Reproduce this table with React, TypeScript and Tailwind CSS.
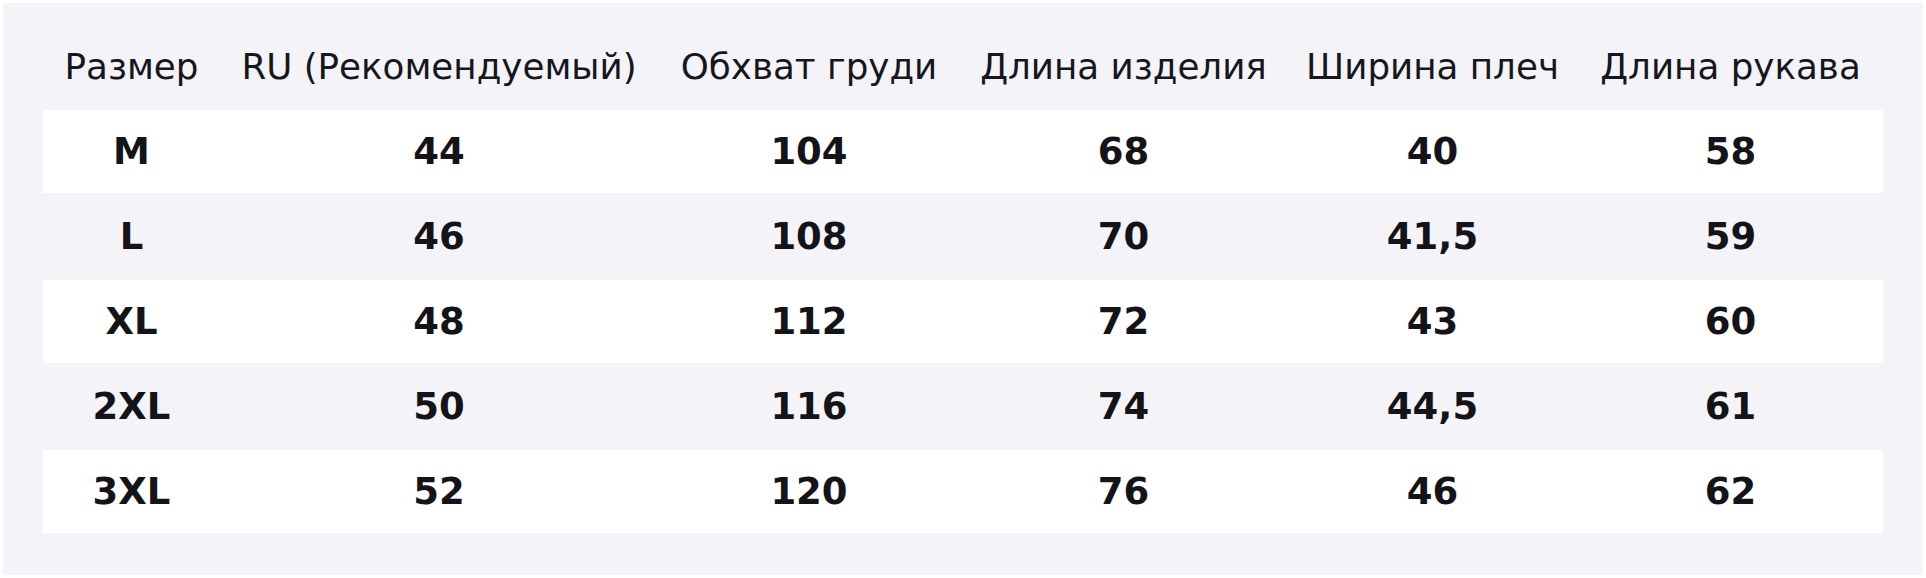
const headers = [
  "Размер",
  "RU (Рекомендуемый)",
  "Обхват груди",
  "Длина изделия",
  "Ширина плеч",
  "Длина рукава",
];

const rows = [
  ["M", "44", "104", "68", "40", "58"],
  ["L", "46", "108", "70", "41,5", "59"],
  ["XL", "48", "112", "72", "43", "60"],
  ["2XL", "50", "116", "74", "44,5", "61"],
  ["3XL", "52", "120", "76", "46", "62"],
];

const cols = "grid grid-cols-[177px_438px_302px_327px_291px_305px]";

export default function App() {
  return (
    <div className="bg-white p-[3px] font-['DejaVu_Sans',sans-serif] text-[#16161d]">
      <div className="w-[1920px] h-[572px] bg-[#f4f4f8] px-[40px]">
        {/* Header */}
        <div className={`${cols} h-[107px] pt-[20px] items-center`}>
          {headers.map((h) => (
            <div key={h} className="text-center text-[35.7px] leading-none whitespace-nowrap">
              {h}
            </div>
          ))}
        </div>

        {/* Body */}
        {rows.map((row, i) => (
          <div
            key={row[0]}
            className={`${cols} items-center ${i % 2 === 0 ? "h-[83px] bg-white" : "h-[87px]"}`}
          >
            {row.map((cell, j) => (
              <div key={j} className="text-center text-[37px] font-bold leading-none text-[#131318]">
                {cell}
              </div>
            ))}
          </div>
        ))}
      </div>
    </div>
  );
}
